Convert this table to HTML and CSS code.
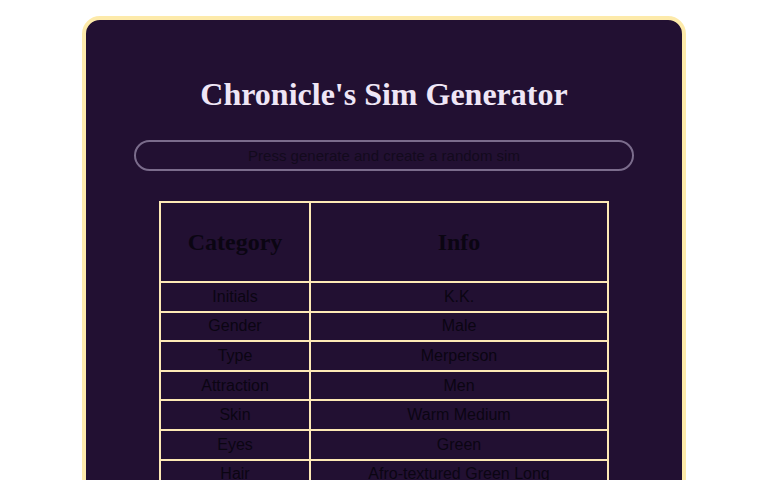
FILE: index.html
```html
<!DOCTYPE html>
<html>
<head>
<meta charset="utf-8">
<link rel="stylesheet" href="styles.css">
</head>
<body>
<main class="card">
  <h1 class="title">Chronicle's Sim Generator</h1>
  <input class="sim-input" type="text" placeholder="Press generate and create a random sim">
  <table class="sim-table">
    <thead>
      <tr><th class="col-cat">Category</th><th class="col-info">Info</th></tr>
    </thead>
    <tbody>
      <tr><td>Initials</td><td>K.K.</td></tr>
      <tr><td>Gender</td><td>Male</td></tr>
      <tr><td>Type</td><td>Merperson</td></tr>
      <tr><td>Attraction</td><td>Men</td></tr>
      <tr><td>Skin</td><td>Warm Medium</td></tr>
      <tr><td>Eyes</td><td>Green</td></tr>
      <tr><td>Hair</td><td>Afro-textured Green Long</td></tr>
    </tbody>
  </table>
</main>
</body>
</html>
```
FILE: styles.css
```css
html, body {
  margin: 0;
  padding: 0;
  background: #ffffff;
}
body {
  padding-top: 16px;
  font-family: "Liberation Sans", Arial, sans-serif;
}
.card {
  width: 596px;
  margin: 0 auto;
  background: #221032;
  border: 4px solid #fdeaaa;
  border-radius: 18px;
  padding: 56px 0 40px;
  display: flex;
  flex-direction: column;
  align-items: center;
}
.title {
  margin: 0;
  font-family: "Liberation Serif", "Times New Roman", serif;
  font-weight: bold;
  font-size: 32px;
  line-height: 37px;
  color: #efe6f6;
  text-align: center;
}
.sim-input {
  box-sizing: border-box;
  margin-top: 27px;
  width: 500px;
  height: 31px;
  border: 2px solid #7b6c8c;
  border-radius: 16px;
  background: transparent;
  font-family: "Liberation Sans", Arial, sans-serif;
  font-size: 15px;
  text-align: center;
  color: #000;
  outline: none;
}
.sim-input::placeholder {
  color: #130a1d;
  opacity: 1;
}
.sim-table {
  margin-top: 30px;
  width: 450px;
  border-collapse: collapse;
  border: 2px solid #fde9b5;
  color: #0b0512;
}
.sim-table th,
.sim-table td {
  border: 2px solid #fde9b5;
  text-align: center;
}
.sim-table th {
  font-family: "Liberation Serif", "Times New Roman", serif;
  font-size: 24px;
  font-weight: bold;
  height: 78px;
  padding: 0;
}
.col-cat { width: 148px; }
.sim-table td {
  font-size: 16px;
  line-height: 18px;
  height: 27.6px;
  padding: 0;
}
```
